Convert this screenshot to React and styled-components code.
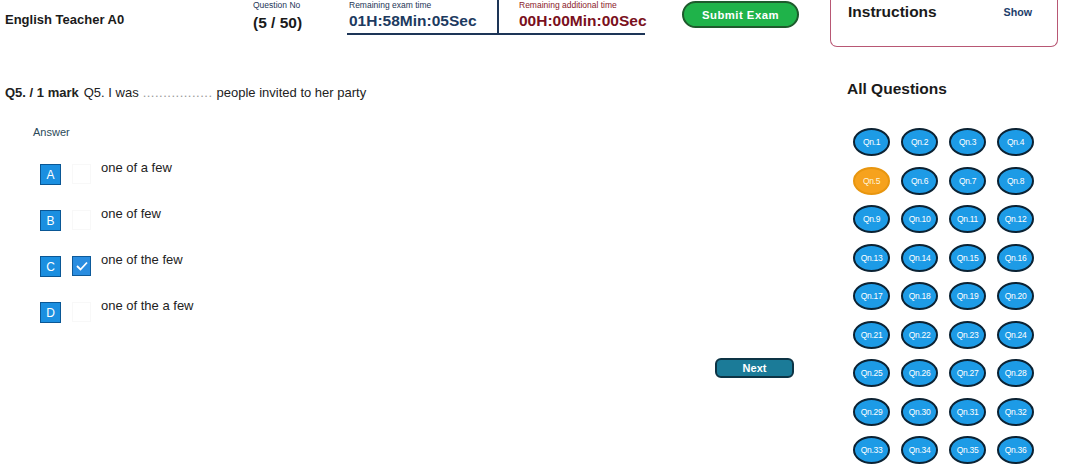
import React from 'react';
import styled, { createGlobalStyle } from 'styled-components';

const GlobalStyle = createGlobalStyle`
  body {
    margin: 0;
    background: #ffffff;
    font-family: "Liberation Sans", Arial, sans-serif;
    color: #1a1a1a;
  }
`;

const Page = styled.div`
  width: 1068px;
  height: 473px;
  overflow: hidden;
  background: #fff;
`;

const Header = styled.div`
  display: flex;
  align-items: flex-start;
  height: 48px;
`;

const Title = styled.div`
  width: 248px;
  padding: 12px 0 0 5px;
  font-size: 13px;
  font-weight: 700;
  line-height: 15px;
`;

const Stat = styled.div`
  display: flex;
  flex-direction: column;
  width: ${p => p.width}px;
`;

const Label = styled.div`
  font-size: 8.5px;
  line-height: 10px;
  color: ${p => p.color || '#1d3557'};
`;

const Value = styled.div`
  font-size: ${p => p.size || 15.5}px;
  font-weight: 700;
  line-height: 18px;
  margin-top: ${p => p.top || 2}px;
  color: ${p => p.color || '#1a1a1a'};
`;

const Timers = styled.div`
  display: flex;
  width: 298px;
  height: 33px;
  border-bottom: 2px solid #1d3557;
  margin-left: -2px;
  flex-shrink: 0;
`;

const TimerHalf = styled.div`
  box-sizing: border-box;
  flex-shrink: 0;
  width: ${p => p.width}px;
  padding-left: ${p => p.pad}px;
  border-left: ${p => (p.divider ? '2px solid #1d3557' : 'none')};
`;

const SubmitButton = styled.button`
  flex-shrink: 0;
  margin: 1px 0 0 37px;
  width: 117px;
  height: 27px;
  border-radius: 14px;
  border: 2px solid #1e5a2c;
  background: #1fb34a;
  color: #fff;
  font-family: "Liberation Sans", Arial, sans-serif;
  font-size: 11.3px;
  font-weight: 700;
  letter-spacing: 0.5px;
`;

const InstructionBox = styled.div`
  flex-shrink: 0;
  margin-left: 31px;
  width: 228px;
  height: 47px;
  border: 1.5px solid #b85774;
  border-top: none;
  border-radius: 0 0 7px 7px;
  display: flex;
  justify-content: space-between;
  align-items: flex-start;
  padding: 3px 25px 0 17px;
  box-sizing: border-box;
`;

const InstrTitle = styled.div`
  font-size: 15.5px;
  font-weight: 700;
  line-height: 18px;
`;

const ShowLink = styled.div`
  font-size: 10.7px;
  font-weight: 700;
  color: #1d3d6a;
  line-height: 18px;
`;

const Body = styled.div`
  display: flex;
`;

const Main = styled.div`
  width: 831px;
  display: flex;
  flex-direction: column;
`;

const QuestionLine = styled.div`
  margin: 38px 0 0 5px;
  font-size: 13px;
  line-height: 14px;
  color: #222;
`;

const Bold = styled.span`
  font-weight: 700;
  margin-right: 5px;
`;

const Dots = styled.span`
  color: #999;
  letter-spacing: 0.5px;
  margin: 0 4px;
`;

const AnswerLabel = styled.div`
  margin: 26px 0 0 33px;
  font-size: 11px;
  line-height: 13px;
  color: #2b4a5a;
`;

const Options = styled.div`
  display: flex;
  flex-direction: column;
  gap: 25px;
  margin: 25px 0 0 40px;
`;

const OptionRow = styled.div`
  display: flex;
  align-items: flex-start;
  height: 21px;
`;

const Letter = styled.div`
  width: 21px;
  height: 21px;
  box-sizing: border-box;
  background: #1b8fe0;
  border: 1.5px solid #0a5795;
  color: #fff;
  font-size: 12px;
  display: flex;
  align-items: center;
  justify-content: center;
`;

const Check = styled.div`
  width: 19px;
  height: 20px;
  margin-left: 11px;
  box-sizing: border-box;
  background: ${p => (p.checked ? '#2a8de0' : '#fff')};
  border: 1.5px solid ${p => (p.checked ? '#0d5a9a' : '#f8f8f8')};
  display: flex;
  align-items: center;
  justify-content: center;
`;

const OptionText = styled.div`
  margin: -4px 0 0 10px;
  font-size: 13px;
  line-height: 15px;
  color: #222;
`;

const Footer = styled.div`
  display: flex;
  justify-content: flex-end;
  padding-right: 37px;
  margin-top: 35px;
`;

const NextButton = styled.button`
  width: 79px;
  height: 20px;
  border-radius: 6px;
  border: 2px solid #0d3445;
  background: #1b7b98;
  color: #fff;
  font-family: "Liberation Sans", Arial, sans-serif;
  font-size: 11px;
  font-weight: 700;
  padding: 0;
`;

const Sidebar = styled.div`
  width: 237px;
  padding-left: 16px;
  box-sizing: border-box;
`;

const SideTitle = styled.div`
  margin-top: 32px;
  font-size: 15.5px;
  font-weight: 700;
  line-height: 18px;
`;

const Grid = styled.div`
  display: grid;
  grid-template-columns: repeat(4, 37px);
  column-gap: 11px;
  row-gap: 10.5px;
  margin: 30px 0 0 6px;
`;

const Bubble = styled.div`
  width: 37px;
  height: 28px;
  box-sizing: border-box;
  border-radius: 50%;
  border: 2px solid ${p => (p.active ? '#e8960f' : '#0b2233')};
  background: ${p => (p.active ? '#f6a21d' : '#1d9be6')};
  color: ${p => (p.active ? '#fff6dd' : '#fff')};
  font-size: 8.5px;
  letter-spacing: -0.3px;
  display: flex;
  align-items: center;
  justify-content: center;
`;

const options = [
  { key: 'A', text: 'one of a few' },
  { key: 'B', text: 'one of few' },
  { key: 'C', text: 'one of the few', checked: true },
  { key: 'D', text: 'one of the a few' },
];

export default function App() {
  return (
    <Page>
      <GlobalStyle />
      <Header>
        <Title>English Teacher A0</Title>
        <Stat width={96}>
          <Label>Question No</Label>
          <Value size={15.5} top={4}>(5 / 50)</Value>
        </Stat>
        <Timers>
          <TimerHalf width={150} pad={2}>
            <Label>Remaining exam time</Label>
            <Value color="#1d3a5f">01H:58Min:05Sec</Value>
          </TimerHalf>
          <TimerHalf width={148} pad={20} divider>
            <Label color="#8a1a2a">Remaining additional time</Label>
            <Value color="#7a1020">00H:00Min:00Sec</Value>
          </TimerHalf>
        </Timers>
        <SubmitButton>Submit Exam</SubmitButton>
        <InstructionBox>
          <InstrTitle>Instructions</InstrTitle>
          <ShowLink>Show</ShowLink>
        </InstructionBox>
      </Header>
      <Body>
        <Main>
          <QuestionLine>
            <Bold>Q5. / 1 mark</Bold>
            Q5. I was<Dots>.................</Dots>people invited to her party
          </QuestionLine>
          <AnswerLabel>Answer</AnswerLabel>
          <Options>
            {options.map(o => (
              <OptionRow key={o.key}>
                <Letter>{o.key}</Letter>
                <Check checked={o.checked}>
                  {o.checked && (
                    <svg width="12" height="10" viewBox="0 0 12 10">
                      <path d="M1 5 L4.5 8.5 L11 1.5" fill="none" stroke="#fff" strokeWidth="1.8" />
                    </svg>
                  )}
                </Check>
                <OptionText>{o.text}</OptionText>
              </OptionRow>
            ))}
          </Options>
          <Footer>
            <NextButton>Next</NextButton>
          </Footer>
        </Main>
        <Sidebar>
          <SideTitle>All Questions</SideTitle>
          <Grid>
            {Array.from({ length: 36 }, (_, i) => (
              <Bubble key={i} active={i === 4}>
                Qn.{i + 1}
              </Bubble>
            ))}
          </Grid>
        </Sidebar>
      </Body>
    </Page>
  );
}
